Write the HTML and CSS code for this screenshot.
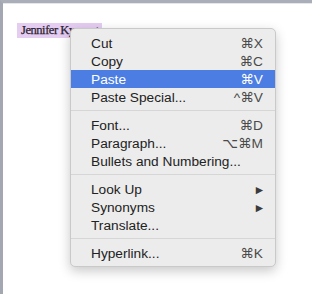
FILE: index.html
```html
<!DOCTYPE html>
<html lang="en">
<head>
    <meta charset="UTF-8">
    <meta name="viewport" content="width=device-width, initial-scale=1.0">
    <title>Context Menu</title>
    <link rel="stylesheet" href="styles.css">
</head>
<body>
    <div class="window">
        <div class="doc">
            <p class="line"><span class="selection">Jennifer Kyoung</span></p>
        </div>

        <ul class="menu">
            <li class="item"><span>Cut</span><span class="key">&#8984;X</span></li>
            <li class="item"><span>Copy</span><span class="key">&#8984;C</span></li>
            <li class="item active"><span>Paste</span><span class="key">&#8984;V</span></li>
            <li class="item"><span>Paste Special...</span><span class="key">^&#8984;V</span></li>
            <li class="sep"></li>
            <li class="item"><span>Font...</span><span class="key">&#8984;D</span></li>
            <li class="item"><span>Paragraph...</span><span class="key">&#8997;&#8984;M</span></li>
            <li class="item"><span>Bullets and Numbering...</span></li>
            <li class="sep"></li>
            <li class="item"><span>Look Up</span><span class="arrow">&#9654;</span></li>
            <li class="item"><span>Synonyms</span><span class="arrow">&#9654;</span></li>
            <li class="item"><span>Translate...</span></li>
            <li class="sep"></li>
            <li class="item"><span>Hyperlink...</span><span class="key">&#8984;K</span></li>
        </ul>
    </div>
</body>
</html>
```

FILE: styles.css
```css
html, body {
    margin: 0;
    padding: 0;
}

body {
    width: 312px;
    height: 294px;
    overflow: hidden;
    background: #ffffff;
}

.window {
    position: relative;
    height: 294px;
    border-top: 3px solid #a9aeb8;
    border-left: 3px solid #a3a7b1;
    box-sizing: border-box;
}

.doc {
    height: 100%;
    background: #ffffff;
    border-top: 1px solid #e4e6ea;
    padding: 19px 0 0 14px;
    box-sizing: border-box;
}

.line {
    margin: 0;
    font-family: "Liberation Serif", serif;
    font-size: 12.5px;
    line-height: 15px;
    letter-spacing: -0.45px;
    color: #2a1f30;
}

.selection {
    display: inline-block;
    width: 81px;
    padding-left: 4px;
    background: #e5cdf2;
    white-space: nowrap;
    overflow: hidden;
    -webkit-text-stroke: 0.25px #2a1f30;
}

/* context menu floating over the document */
.menu {
    position: absolute;
    left: 67px;
    top: 25px;
    width: 206px;
    margin: 0;
    padding: 5px 0 4px;
    list-style: none;
    background: #ececec;
    border: 1px solid #c9c9c9;
    border-radius: 5px;
    box-shadow: 0 4px 12px rgba(0, 0, 0, 0.22);
    box-sizing: border-box;
    font-family: "Liberation Sans", "DejaVu Sans", sans-serif;
    font-size: 13.7px;
    color: #222222;
}

.item {
    display: flex;
    justify-content: space-between;
    align-items: center;
    height: 18px;
    padding: 0 12px 0 20px;
}

.item.active {
    background: #4c7de2;
    color: #ffffff;
}

.key {
    color: #4a4a4a;
}

.item.active .key {
    color: #ffffff;
}

.arrow {
    font-family: "DejaVu Sans", sans-serif;
    font-size: 9.5px;
    color: #3a3a3a;
}

.sep {
    height: 1px;
    margin: 4px 0 5px;
    background: #d6d6d6;
}
```
